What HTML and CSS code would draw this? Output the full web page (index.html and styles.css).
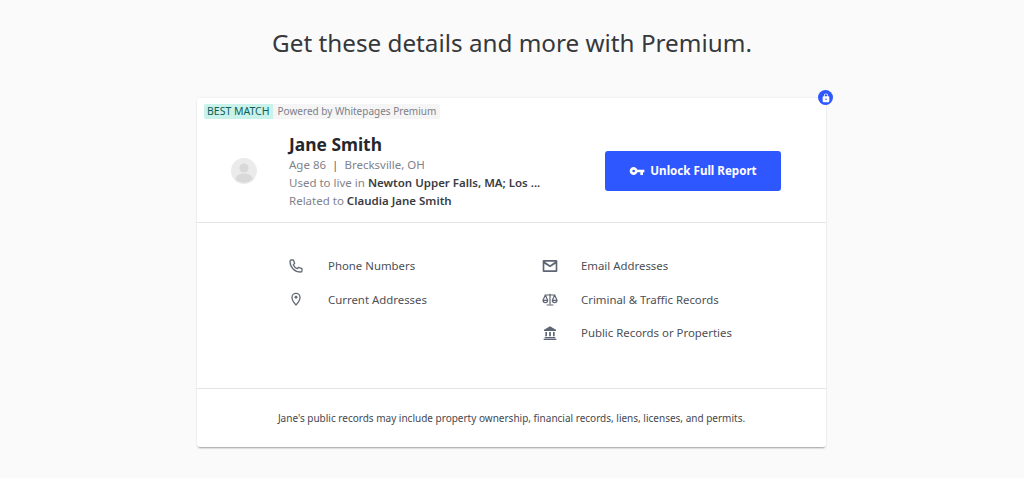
FILE: index.html
```html
<!DOCTYPE html>
<html lang="en">
<head>
<meta charset="utf-8">
<title>Premium</title>
<link rel="stylesheet" href="styles.css">
</head>
<body>
<h1 class="title">Get these details and more with Premium.</h1>
<main class="card">
  <span class="lock"><svg viewBox="0 0 24 24" width="10" height="10"><path fill="#fff" d="M18 8h-1V6a5 5 0 0 0-10 0v2H6a2 2 0 0 0-2 2v10a2 2 0 0 0 2 2h12a2 2 0 0 0 2-2V10a2 2 0 0 0-2-2zm-6 9a2 2 0 1 1 0-4 2 2 0 0 1 0 4zm3.100-9H8.900V6a3.100 3.100 0 0 1 6.200 0v2z"/></svg></span>
  <section class="head">
    <div class="tags"><span class="tag-match">BEST MATCH</span><span class="tag-power">Powered by Whitepages Premium</span></div>
    <div class="person">
      <div class="avatar"><svg viewBox="0 0 26 26" width="26" height="26"><circle cx="13" cy="13" r="13" fill="#ebebeb"/><circle cx="13" cy="10" r="4.600" fill="#d9d9d9"/><path fill="#d9d9d9" d="M4.500 21.500c0-4 4-6 8.500-6s8.500 2 8.500 6a13 13 0 0 1-17 0z"/></svg></div>
      <div class="info">
        <h2 class="name">Jane Smith</h2>
        <p class="line">Age 86<span class="sep">|</span>Brecksville, OH</p>
        <p class="line">Used to live in <b>Newton Upper Falls, MA; Los ...</b></p>
        <p class="line">Related to <b>Claudia Jane Smith</b></p>
      </div>
      <a class="unlock" href="#"><svg viewBox="0 0 24 24" width="16" height="16"><path fill="#fff" d="M12.650 10A6 6 0 1 0 12.650 14H17v4h4v-4h2v-4H12.650zM7 14a2 2 0 1 1 0-4 2 2 0 0 1 0 4z"/></svg>Unlock Full Report</a>
    </div>
  </section>
  <section class="details">
    <ul class="col col-left">
      <li class="item"><svg class="ico" viewBox="0 0 24 24"><path fill="none" stroke="#666c78" stroke-width="2" stroke-linecap="round" stroke-linejoin="round" d="M8 3H5a2 2 0 0 0-2 2c0 9 7 16 16 16a2 2 0 0 0 2-2v-3l-5-2-2 2c-2.500-1-5-3.500-6-6l2-2z"/></svg>Phone Numbers</li>
      <li class="item"><svg class="ico" viewBox="0 0 24 24"><path fill="none" stroke="#666c78" stroke-width="2" stroke-linejoin="round" d="M12 21s6-6 6-11.500a6 6 0 0 0-12 0C6 15 12 21 12 21z"/><circle cx="12" cy="9.500" r="2.200" fill="#666c78"/></svg>Current Addresses</li>
    </ul>
    <ul class="col col-right">
      <li class="item"><svg class="ico" viewBox="0 0 24 24"><path fill="#5f6673" fill-rule="evenodd" d="M2.500 3h19A1.500 1.500 0 0 1 23 4.500v15a1.500 1.500 0 0 1-1.500 1.500h-19A1.500 1.500 0 0 1 1 19.500v-15A1.500 1.500 0 0 1 2.500 3zM3.500 8.500V18.500h17V8.500L12 14zM4.500 5.500l7.500 5.300 7.500-5.300z"/></svg>Email Addresses</li>
      <li class="item"><svg class="ico" viewBox="0 0 24 24"><path fill="none" stroke="#5f6673" stroke-width="1.800" stroke-linejoin="round" d="M12 4v16M7 21h10M4 6h16M5 6l-3.500 8h7zM19 6l-3.500 8h7zM1.500 14a3.500 3.500 0 0 0 7 0M15.500 14a3.500 3.500 0 0 0 7 0"/></svg>Criminal &amp; Traffic Records</li>
      <li class="item"><svg class="ico" viewBox="0 0 24 24"><path fill="#5f6673" d="M12 2 3 7v2h18V7zM5 10.500h2.500V17H5zM10.700 10.500h2.600V17h-2.600zM16.500 10.500H19V17h-2.500zM4 18h16v2H4zM2.500 20.500h19V22.500h-19z"/></svg>Public Records or Properties</li>
    </ul>
  </section>
  <footer class="foot">Jane's public records may include property ownership, financial records, liens, licenses, and permits.</footer>
</main>
</body>
</html>
```
FILE: styles.css
```css
* { box-sizing: border-box; }
html, body { margin: 0; padding: 0; }
body {
  background: #fafafa;
  font-family: "Noto Sans", "Open Sans", sans-serif;
  color: #2b2d33;
  height: 478px;
  overflow: hidden;
}
.title {
  margin: 0;
  padding-top: 24px;
  height: 98px;
  text-align: center;
  font-size: 24.250px;
  line-height: 38px;
  font-weight: 400;
  color: #36383c;
}
.card {
  position: relative;
  width: 629px;
  height: 349px;
  margin: 0 0 0 197px;
  background: #fff;
  border-radius: 3px;
  box-shadow: 0 2px 2px -1px rgba(0,0,0,.35), 0 0 3px rgba(0,0,0,.08);
  display: flex;
  flex-direction: column;
}
.lock {
  position: absolute;
  top: -8px;
  right: -7px;
  width: 15px;
  height: 15px;
  border-radius: 50%;
  background: #2f57ff;
  display: flex;
  align-items: center;
  justify-content: center;
}
.head {
  height: 125px;
  border-bottom: 1px solid #e4e4e4;
  padding: 6px 0 0 7px;
}
.tags { display: flex; height: 15px; font-size: 10.500px; line-height: 15px; }
.tag-match { background: #c9f2ea; color: #0e5f58; padding: 0 3px; border-radius: 2px 0 0 2px; }
.tag-power { background: #f5f5f5; color: #7d8188; padding: 0 4px 0 5px; font-size: 10px; border-radius: 0 2px 2px 0; }
.person { display: flex; align-items: center; padding-left: 27px; }
.avatar { width: 26px; height: 26px; margin-top: 12px; }
.info { width: 316px; margin-left: 32px; padding-top: 13px; }
.name { margin: 0; font-size: 17.400px; line-height: 24px; font-weight: 700; color: #25272c; }
.line { margin: 0; font-size: 11.500px; line-height: 18px; color: #7f838b; white-space: nowrap; }
.line b { font-weight: 600; color: #3a3c42; }
.sep { margin: 0 6px; color: #5a5d64; }
.unlock {
  display: flex;
  align-items: center;
  justify-content: center;
  gap: 5px;
  width: 176px;
  height: 40px;
  margin-top: 12px;
  background: #2f57ff;
  border-radius: 3px;
  color: #fff;
  font-size: 11.600px;
  font-weight: 700;
  text-decoration: none;
}
.details { height: 166px; border-bottom: 1px solid #e4e4e4; display: flex; padding: 26px 0 0 91px; }
.col { list-style: none; margin: 0; padding: 0; width: 253px; }
.item { display: flex; align-items: center; height: 33.500px; font-size: 11.400px; color: #4c4f56; }
.ico { width: 16px; height: 16px; margin-right: 24px; flex: none; }
.col-right .ico { margin-left: 1px; margin-right: 23px; }
.foot { flex: 1; display: flex; align-items: center; justify-content: center; font-size: 10px; color: #45484f; }
```
